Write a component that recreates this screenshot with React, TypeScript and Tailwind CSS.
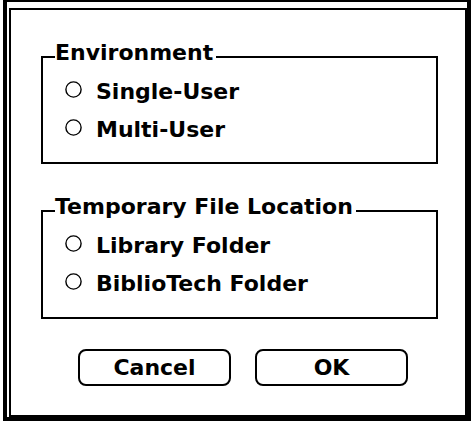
import React, { useState } from "react";

const font = "font-['DejaVu_Sans','Liberation_Sans',sans-serif] font-bold text-[22px] text-black";

interface RadioOption {
  id: string;
  label: string;
}

const RadioDot: React.FC<{ checked: boolean }> = ({ checked }) => (
  <svg width={17} height={17} className="w-[17px] h-[17px] mb-[5px] shrink-0" viewBox="0 0 17 17">
    <circle cx="8.5" cy="8.5" r="7.6" fill="white" stroke="black" strokeWidth="1.4" />
    {checked && <circle cx="8.5" cy="8.5" r="4" fill="black" />}
  </svg>
);

interface GroupProps {
  title: string;
  options: RadioOption[];
  value: string | null;
  onChange: (id: string) => void;
  className?: string;
}

const RadioGroupBox: React.FC<GroupProps> = ({ title, options, value, onChange, className }) => (
  <fieldset className={`w-[397px] border-2 border-black pl-[12px] pb-[13px] ${className ?? ""}`}>
    <legend className="leading-[26px] pb-[7px] pr-[3px]">{title}</legend>
    {options.map((opt) => (
      <label
        key={opt.id}
        className="flex items-center gap-[14px] ml-[10px] leading-[38px] h-[38px] cursor-pointer select-none"
        onClick={() => onChange(opt.id)}
      >
        <RadioDot checked={value === opt.id} />
        <span>{opt.label}</span>
      </label>
    ))}
  </fieldset>
);

const App: React.FC = () => {
  // 兩組選項，預設都沒有選
  const [env, setEnv] = useState<string | null>(null);
  const [tmp, setTmp] = useState<string | null>(null);

  return (
    <div className={`w-[474px] h-[425px] bg-white px-[3px] ${font}`}>
      {/* 外框 */}
      <div className="w-[468px] h-[421px] border-t-2 border-l-4 border-r-4 border-b-4 border-black flex flex-col">
        <div className="flex-1 ml-[2px] mt-[6px] border-2 border-black pl-[30px] flex flex-col">
          <RadioGroupBox
            className="mt-[30px]"
            title="Environment"
            options={[
              { id: "single", label: "Single-User" },
              { id: "multi", label: "Multi-User" },
            ]}
            value={env}
            onChange={setEnv}
          />
          <RadioGroupBox
            className="mt-[30px] pb-[14px]"
            title="Temporary File Location"
            options={[
              { id: "library", label: "Library Folder" },
              { id: "biblio", label: "BiblioTech Folder" },
            ]}
            value={tmp}
            onChange={setTmp}
          />

          {/* 按鈕 */}
          <div className="flex gap-[24px] mt-[30px] ml-[37px]">
            <button className="w-[153px] h-[37px] border-2 border-black rounded-[8px] leading-[33px] bg-white">
              Cancel
            </button>
            <button className="w-[153px] h-[37px] border-2 border-black rounded-[8px] leading-[33px] bg-white">
              OK
            </button>
          </div>
        </div>
      </div>
    </div>
  );
};

export default App;
